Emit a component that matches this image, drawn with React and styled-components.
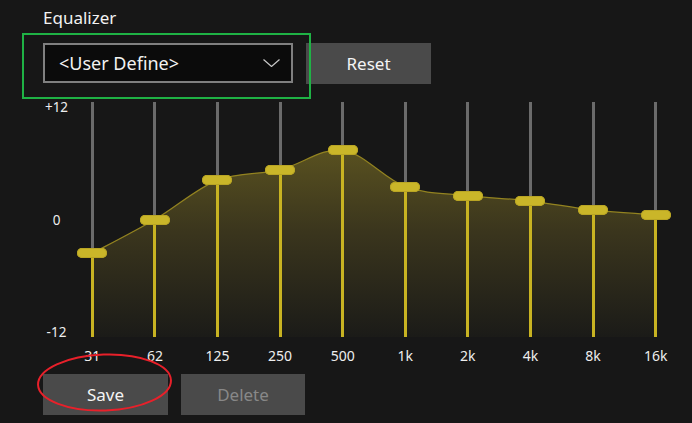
import React from "react";
import styled, { createGlobalStyle } from "styled-components";

const Global = createGlobalStyle`
  html, body { margin: 0; padding: 0; background: #171717; }
  body { font-family: "Segoe UI", "Noto Sans", "Open Sans", sans-serif; color: #f0f0f0; }
`;

const Page = styled.div`
  position: relative;
  width: 692px;
  height: 423px;
  box-sizing: border-box;
  padding: 7px 0 0 43px;
  background: #171717;
  overflow: hidden;
`;

const Title = styled.div`
  font-size: 17px;
  line-height: 22px;
  color: #f2f2f2;
`;

const Controls = styled.div`
  display: flex;
  gap: 13px;
  margin-top: 14px;
  align-items: flex-start;
`;

const Select = styled.div`
  width: 250px;
  height: 40px;
  box-sizing: border-box;
  border: 2px solid #808080;
  background: #0b0b0b;
  display: flex;
  align-items: center;
  justify-content: space-between;
  padding: 0 11px 0 14px;
  font-size: 18px;
  color: #f2f2f2;
`;

const Button = styled.div`
  width: ${(p) => p.$w}px;
  height: 41px;
  background: #4a4a4a;
  display: flex;
  align-items: center;
  justify-content: center;
  font-size: 17px;
  color: ${(p) => (p.$disabled ? "#888888" : "#f4f4f4")};
`;

const Chart = styled.div`
  display: flex;
  margin-top: 18px;
  height: 235px;
`;

const YAxis = styled.div`
  width: 18px;
  display: flex;
  flex-direction: column;
  justify-content: space-between;
  margin: -2px 0;
`;

const YLabel = styled.div`
  width: 27px;
  text-align: center;
  font-size: 13.5px;
  line-height: 14px;
  color: #eeeeee;
`;

const Sliders = styled.div`
  position: relative;
  width: 626px;
  height: 235px;
  display: flex;
`;

const Curve = styled.svg`
  position: absolute;
  left: 0;
  top: 0;
  width: 626px;
  height: 235px;
`;

const Column = styled.div`
  position: relative;
  flex: 1;
  display: flex;
  justify-content: center;
`;

const Track = styled.div`
  width: 3px;
  height: 100%;
  background: #6b6b6b;
  position: relative;
`;

const Fill = styled.div`
  position: absolute;
  left: 0;
  right: 0;
  bottom: 0;
  background: #c8b322;
`;

const Thumb = styled.div`
  position: absolute;
  left: 50%;
  width: 30px;
  height: 10px;
  margin-left: -15px;
  margin-top: -5px;
  border-radius: 5px;
  background: #cab629;
  box-shadow: inset 0 0 0 1px #b9a524;
`;

const FreqRow = styled.div`
  display: flex;
  width: 626px;
  margin-left: 18px;
  margin-top: 10px;
`;

const Freq = styled.div`
  flex: 1;
  text-align: center;
  font-size: 14px;
  line-height: 18px;
  color: #eeeeee;
`;

const Actions = styled.div`
  display: flex;
  gap: 13px;
  margin-top: 9px;
`;

const Annotations = styled.svg`
  position: absolute;
  left: 0;
  top: 0;
  width: 692px;
  height: 423px;
  pointer-events: none;
`;

const bands = [
  { f: "31", v: -3.6 },
  { f: "62", v: 0 },
  { f: "125", v: 4.2 },
  { f: "250", v: 5.3 },
  { f: "500", v: 7.4 },
  { f: "1k", v: 3.5 },
  { f: "2k", v: 2.55 },
  { f: "4k", v: 1.97 },
  { f: "8k", v: 1.0 },
  { f: "16k", v: 0.5 },
];

const H = 235;
const colW = 62.6;
const yOf = (v) => 117.5 - v * 9.375;

function buildPath(pts) {
  let d = `M ${pts[0][0]} ${pts[0][1]}`;
  for (let i = 0; i < pts.length - 1; i++) {
    const p0 = pts[i - 1] || pts[i];
    const p1 = pts[i];
    const p2 = pts[i + 1];
    const p3 = pts[i + 2] || p2;
    const c1x = p1[0] + (p2[0] - p0[0]) / 6;
    const c1y = p1[1] + (p2[1] - p0[1]) / 6;
    const c2x = p2[0] - (p3[0] - p1[0]) / 6;
    const c2y = p2[1] - (p3[1] - p1[1]) / 6;
    d += ` C ${c1x} ${c1y} ${c2x} ${c2y} ${p2[0]} ${p2[1]}`;
  }
  return d;
}

export default function App() {
  const pts = bands.map((b, i) => [colW / 2 + i * colW, yOf(b.v)]);
  const line = buildPath(pts);
  const area = `${line} L ${pts[pts.length - 1][0]} ${H} L ${pts[0][0]} ${H} Z`;

  return (
    <Page>
      <Global />
      <Title>Equalizer</Title>
      <Controls>
        <Select>
          <span>&lt;User Define&gt;</span>
          <svg width="17" height="8" viewBox="0 0 17 8">
            <path d="M0.5 0.5 L8.5 7.5 L16.5 0.5" fill="none" stroke="#c8c8c8" strokeWidth="1.2" />
          </svg>
        </Select>
        <Button $w={125}>Reset</Button>
      </Controls>
      <Chart>
        <YAxis>
          <YLabel>+12</YLabel>
          <YLabel>0</YLabel>
          <YLabel>-12</YLabel>
        </YAxis>
        <Sliders>
          <Curve viewBox={`0 0 626 ${H}`}>
            <defs>
              <linearGradient id="eqfill" gradientUnits="userSpaceOnUse" x1="0" y1="45" x2="0" y2={H}>
                <stop offset="0" stopColor="#5a5220" />
                <stop offset="0.45" stopColor="#3a351d" />
                <stop offset="1" stopColor="#1b1b18" />
              </linearGradient>
            </defs>
            <path d={area} fill="url(#eqfill)" />
            <path d={line} fill="none" stroke="#938320" strokeWidth="1.3" />
          </Curve>
          {bands.map((b) => {
            const y = yOf(b.v);
            return (
              <Column key={b.f}>
                <Track>
                  <Fill style={{ height: `${H - y}px` }} />
                </Track>
                <Thumb style={{ top: `${y}px` }} />
              </Column>
            );
          })}
        </Sliders>
      </Chart>
      <FreqRow>
        {bands.map((b) => (
          <Freq key={b.f}>{b.f}</Freq>
        ))}
      </FreqRow>
      <Actions>
        <Button $w={125}>Save</Button>
        <Button $w={124} $disabled>Delete</Button>
      </Actions>
      <Annotations viewBox="0 0 692 423">
        <rect x="23" y="34" width="287" height="64" fill="none" stroke="#1fb245" strokeWidth="2" />
        <ellipse cx="104.5" cy="382.5" rx="66.5" ry="28" fill="none" stroke="#e8202a" strokeWidth="2" transform="rotate(-2 104.5 382.5)" />
      </Annotations>
    </Page>
  );
}
